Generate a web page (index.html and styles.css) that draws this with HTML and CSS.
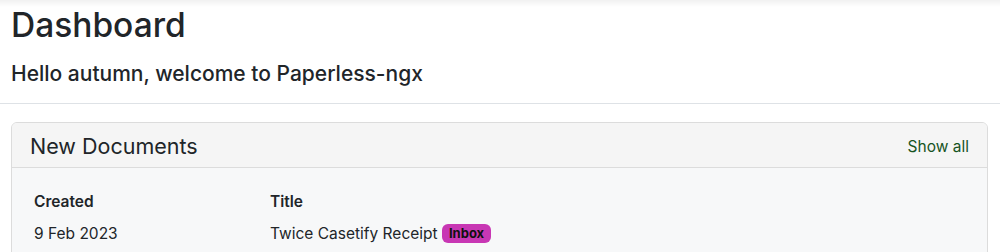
FILE: index.html
```html
<!DOCTYPE html>
<html lang="en">
<head>
  <meta charset="UTF-8">
  <title>Dashboard - Paperless-ngx</title>
  <link rel="stylesheet" href="styles.css">
</head>
<body>

  <div class="page-header">
    <h1>Dashboard</h1>
    <p class="welcome">Hello autumn, welcome to Paperless-ngx</p>
  </div>

  <div class="card">
    <div class="card-header">
      <h5>New Documents</h5>
      <a href="#" class="show-all">Show all</a>
    </div>
    <div class="card-body">
      <table class="doc-table">
        <thead>
          <tr>
            <th>Created</th>
            <th>Title</th>
          </tr>
        </thead>
        <tbody>
          <tr>
            <td>9 Feb 2023</td>
            <td>Twice Casetify Receipt <span class="badge">Inbox</span></td>
          </tr>
        </tbody>
      </table>
    </div>
  </div>

</body>
</html>
```

FILE: styles.css
```css
body {
  font-family: Inter, 'Liberation Sans', sans-serif;
  color: #212529;
  background: #fff linear-gradient(#f1f1f1, #fff 7px) no-repeat;
  margin: 0;
}

.page-header {
  padding: 5px 11px 14px;
  border-bottom: 1px solid #dee2e6;
}

.page-header h1 {
  margin: 0;
  font-size: 33.5px;
  font-weight: 500;
  line-height: 40px;
}

.welcome {
  margin: 14px 0 0;
  font-size: 21px;
  font-weight: 500;
  line-height: 30px;
}

.card {
  margin: 18px 12px 40px 11px;
  border: 1px solid #dcdcdc;
  border-radius: 6px;
  background: #f7f8f9;
  overflow: hidden;
}

.card-header {
  display: flex;
  justify-content: space-between;
  align-items: center;
  padding: 8px 18px 6px;
  background: #f5f5f5;
  border-bottom: 1px solid #dcdcdc;
}

.card-header h5 {
  margin: 0;
  font-size: 21.5px;
  font-weight: 400;
  line-height: 30px;
}

.show-all {
  color: #17541f;
  text-decoration: none;
  font-size: 15.5px;
}

.card-body {
  padding: 18px 18px 30px;
}

.doc-table {
  border-collapse: collapse;
  font-size: 15.5px;
  line-height: 24px;
}

.doc-table th,
.doc-table td {
  padding: 4px;
  text-align: left;
}

.doc-table th {
  font-weight: 600;
}

.doc-table th:first-child,
.doc-table td:first-child {
  width: 228px;
}

.badge {
  display: inline-block;
  padding: 0 7px;
  border-radius: 6px;
  background: #c837b4;
  color: #111;
  font-size: 13px;
  font-weight: 700;
  line-height: 19px;
  vertical-align: 1px;
}
```
